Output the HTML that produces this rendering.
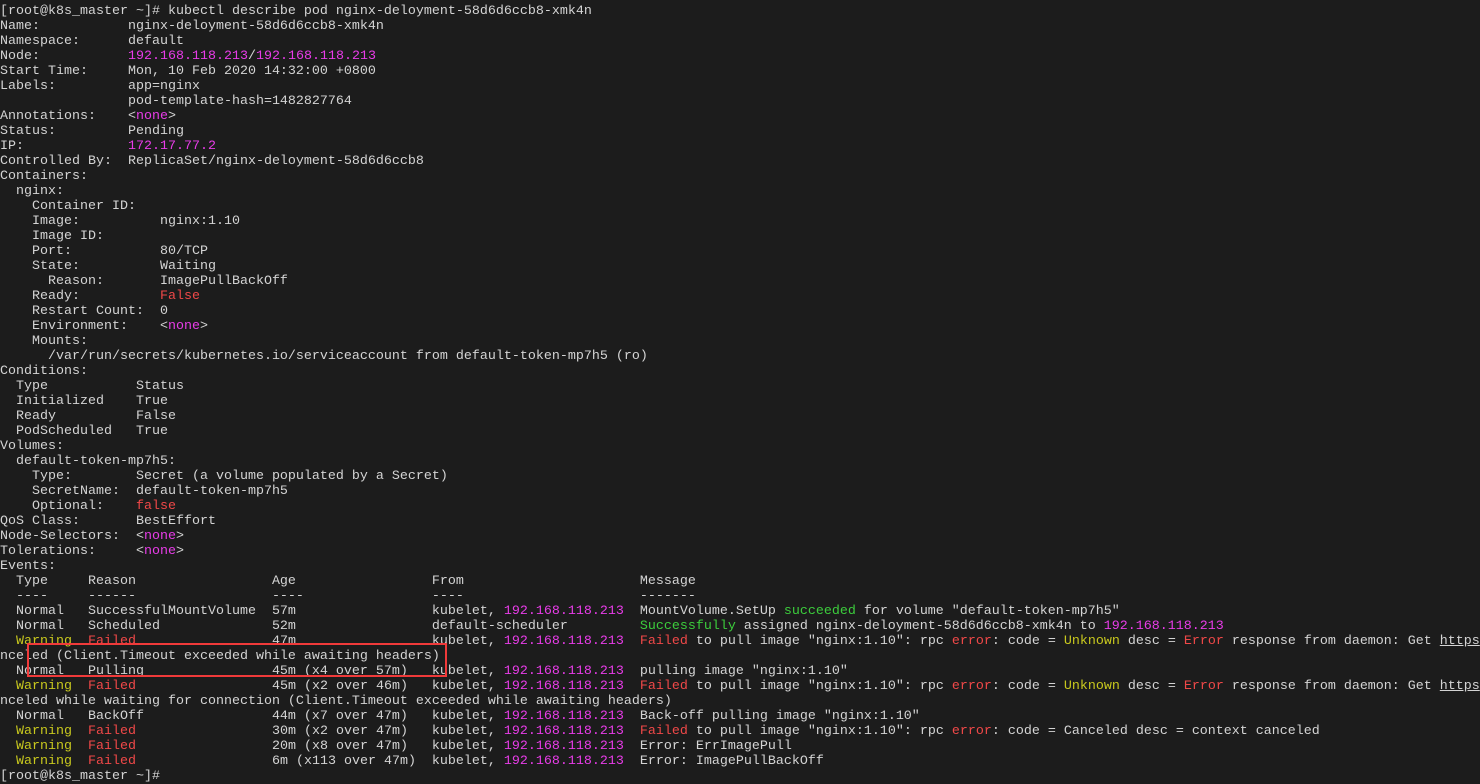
<!DOCTYPE html><html><head><style>
html,body{margin:0;padding:0;background:#1c1c1c;width:1480px;height:784px;overflow:hidden}
pre{margin:0;padding:4px 0 0 0;font-family:"Liberation Mono",monospace;font-size:13.33px;line-height:15px;color:#d4d4d4;white-space:pre}
.m{color:#e83ce8}.r{color:#f04848}.y{color:#c8c81e}.g{color:#3ccc3c}
.box{position:absolute;left:27px;top:643px;width:416px;height:30px;border:2px solid #f03a3a}
.u{text-decoration:underline}
</style></head><body><pre>[root@k8s_master ~]# kubectl describe pod nginx-deloyment-58d6d6ccb8-xmk4n
Name:           nginx-deloyment-58d6d6ccb8-xmk4n
Namespace:      default
Node:           <span class="m">192.168.118.213</span>/<span class="m">192.168.118.213</span>
Start Time:     Mon, 10 Feb 2020 14:32:00 +0800
Labels:         app=nginx
                pod-template-hash=1482827764
Annotations:    &lt;<span class="m">none</span>&gt;
Status:         Pending
IP:             <span class="m">172.17.77.2</span>
Controlled By:  ReplicaSet/nginx-deloyment-58d6d6ccb8
Containers:
  nginx:
    Container ID:
    Image:          nginx:1.10
    Image ID:
    Port:           80/TCP
    State:          Waiting
      Reason:       ImagePullBackOff
    Ready:          <span class="r">False</span>
    Restart Count:  0
    Environment:    &lt;<span class="m">none</span>&gt;
    Mounts:
      /var/run/secrets/kubernetes.io/serviceaccount from default-token-mp7h5 (ro)
Conditions:
  Type           Status
  Initialized    True
  Ready          False
  PodScheduled   True
Volumes:
  default-token-mp7h5:
    Type:        Secret (a volume populated by a Secret)
    SecretName:  default-token-mp7h5
    Optional:    <span class="r">false</span>
QoS Class:       BestEffort
Node-Selectors:  &lt;<span class="m">none</span>&gt;
Tolerations:     &lt;<span class="m">none</span>&gt;
Events:
  Type     Reason                 Age                 From                      Message
  ----     ------                 ----                ----                      -------
  Normal   SuccessfulMountVolume  57m                 kubelet, <span class="m">192.168.118.213</span>  MountVolume.SetUp <span class="g">succeeded</span> for volume "default-token-mp7h5"
  Normal   Scheduled              52m                 default-scheduler         <span class="g">Successfully</span> assigned nginx-deloyment-58d6d6ccb8-xmk4n to <span class="m">192.168.118.213</span>
  <span class="y">Warning</span>  <span class="r">Failed</span>                 47m                 kubelet, <span class="m">192.168.118.213</span>  <span class="r">Failed</span> to pull image "nginx:1.10": rpc <span class="r">error</span>: code = <span class="y">Unknown</span> desc = <span class="r">Error</span> response from daemon: Get <span class="u">https</span>
nceled (Client.Timeout exceeded while awaiting headers)
  Normal   Pulling                45m (x4 over 57m)   kubelet, <span class="m">192.168.118.213</span>  pulling image "nginx:1.10"
  <span class="y">Warning</span>  <span class="r">Failed</span>                 45m (x2 over 46m)   kubelet, <span class="m">192.168.118.213</span>  <span class="r">Failed</span> to pull image "nginx:1.10": rpc <span class="r">error</span>: code = <span class="y">Unknown</span> desc = <span class="r">Error</span> response from daemon: Get <span class="u">https</span>
nceled while waiting for connection (Client.Timeout exceeded while awaiting headers)
  Normal   BackOff                44m (x7 over 47m)   kubelet, <span class="m">192.168.118.213</span>  Back-off pulling image "nginx:1.10"
  <span class="y">Warning</span>  <span class="r">Failed</span>                 30m (x2 over 47m)   kubelet, <span class="m">192.168.118.213</span>  <span class="r">Failed</span> to pull image "nginx:1.10": rpc <span class="r">error</span>: code = Canceled desc = context canceled
  <span class="y">Warning</span>  <span class="r">Failed</span>                 20m (x8 over 47m)   kubelet, <span class="m">192.168.118.213</span>  Error: ErrImagePull
  <span class="y">Warning</span>  <span class="r">Failed</span>                 6m (x113 over 47m)  kubelet, <span class="m">192.168.118.213</span>  Error: ImagePullBackOff
[root@k8s_master ~]# </pre><div class="box"></div></body></html>
